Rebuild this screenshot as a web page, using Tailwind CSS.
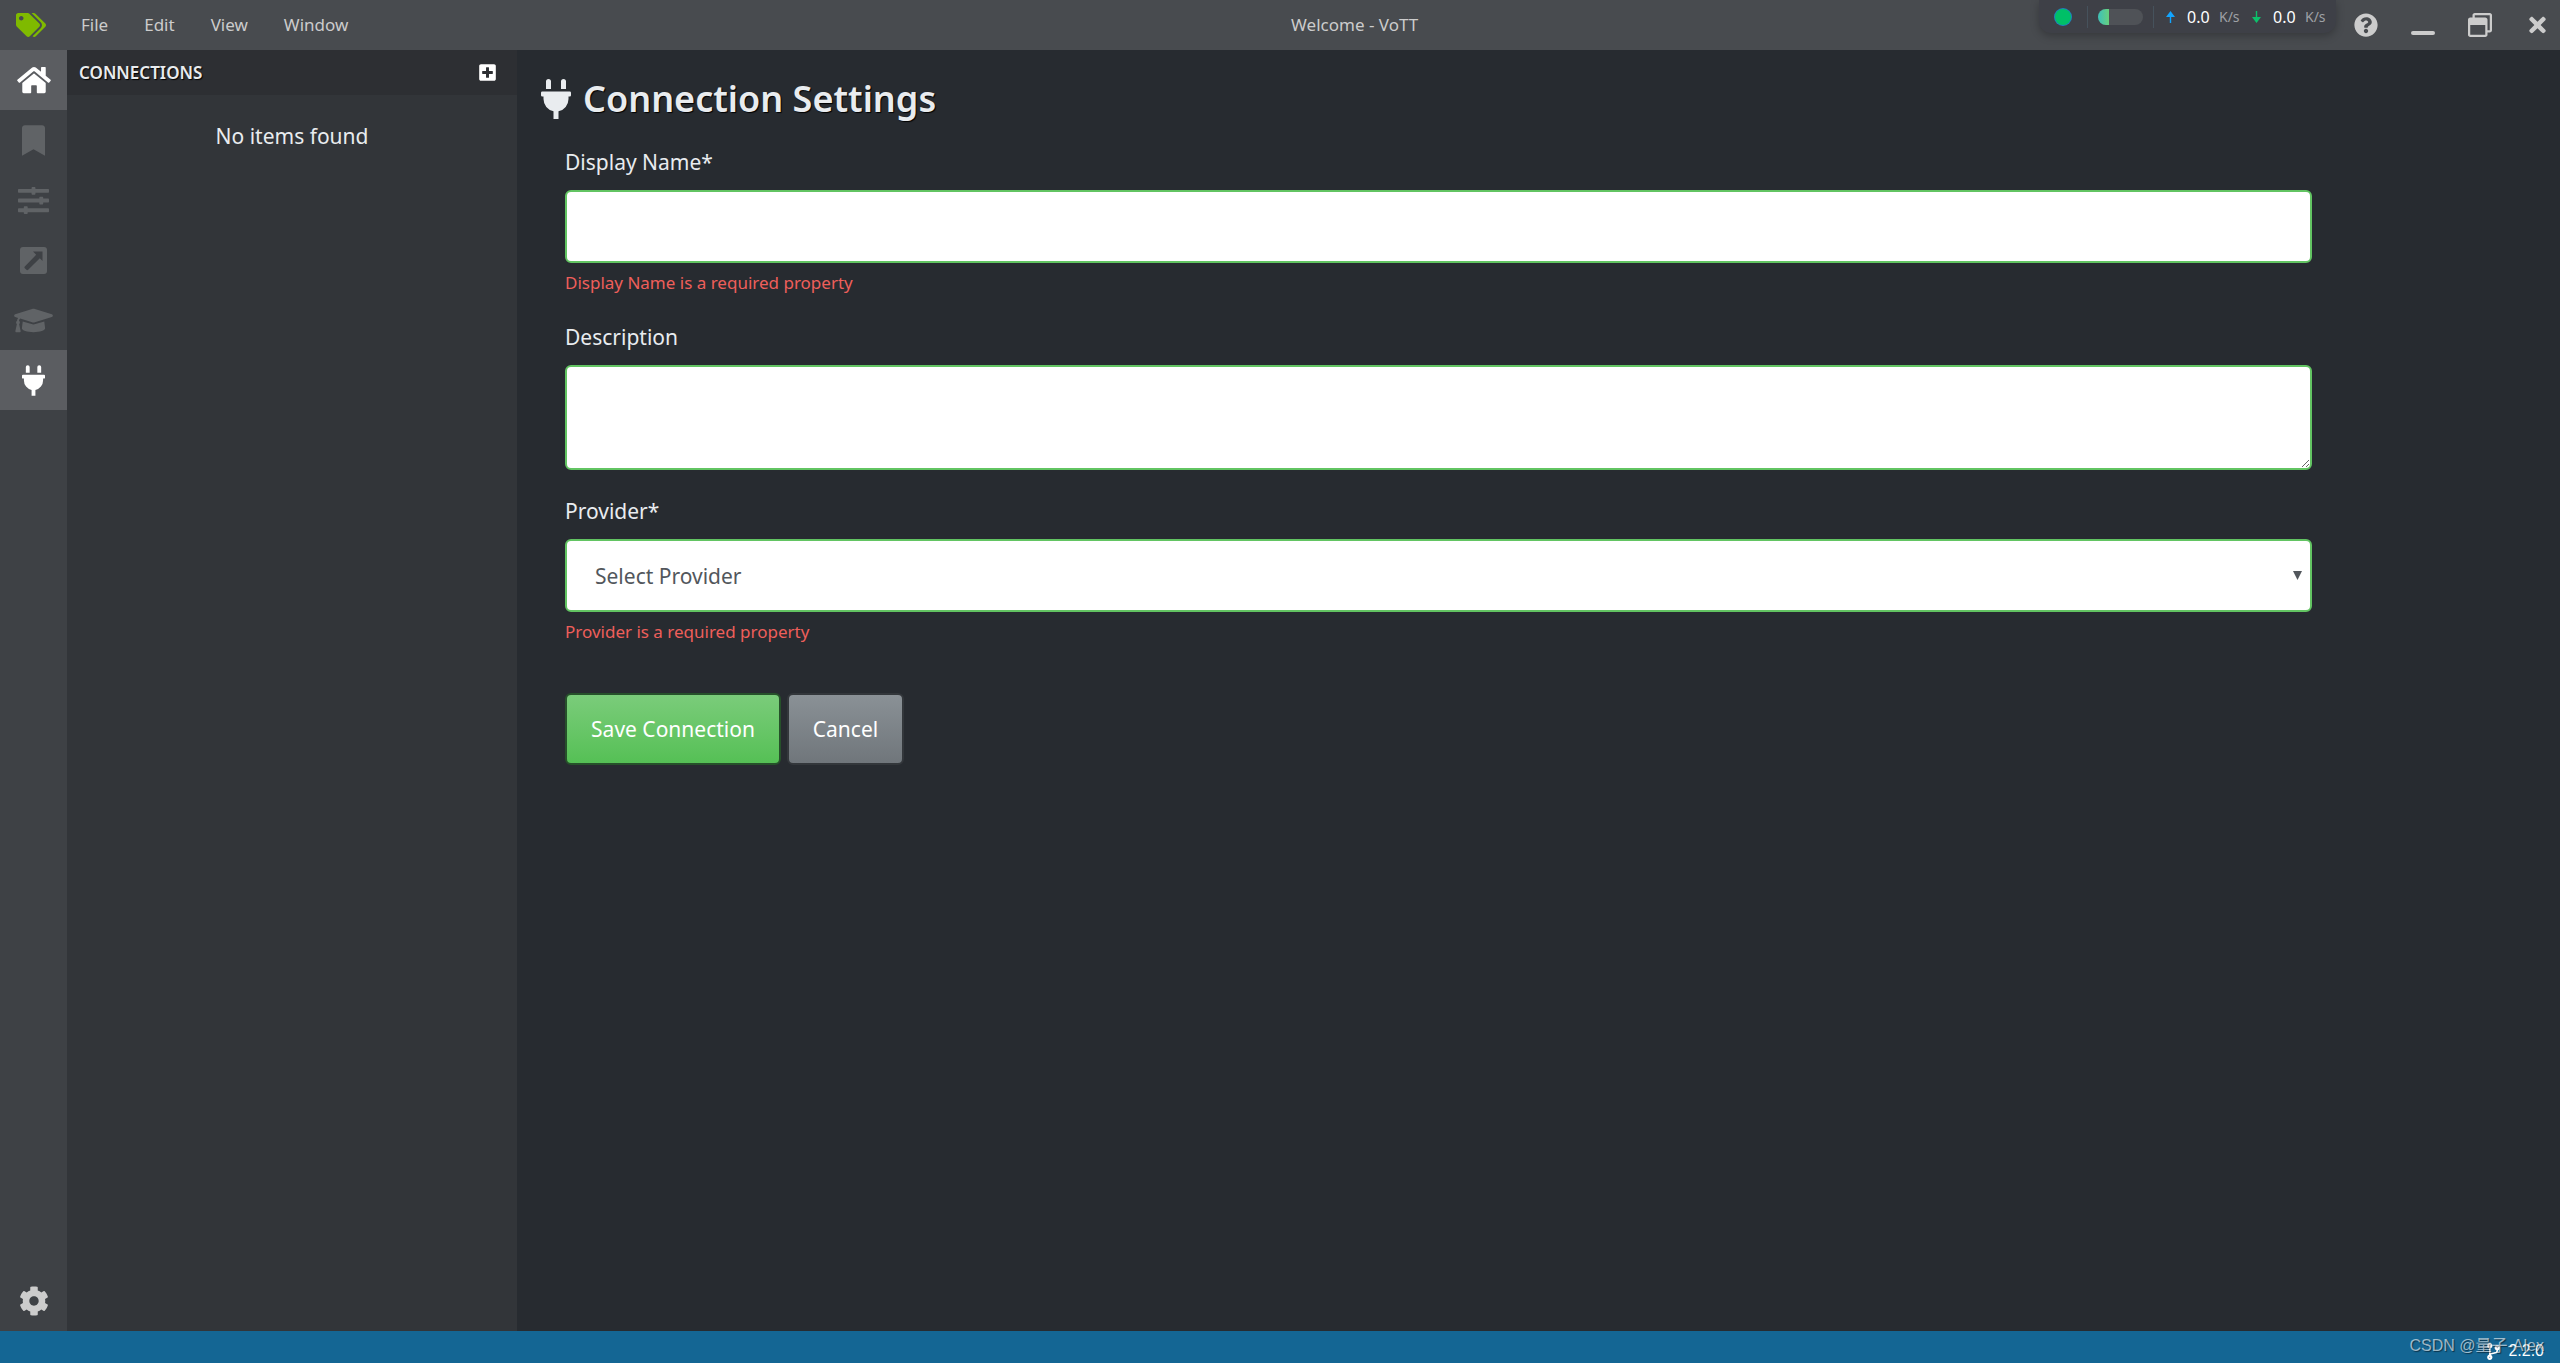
<!DOCTYPE html>
<html lang="en">
<head>
<meta charset="utf-8">
<meta name="viewport" content="width=device-width, initial-scale=1">
<title>Welcome - VoTT</title>
<script src="https://cdn.jsdelivr.net/npm/@tailwindcss/browser@4"></script>
</head>
<body class="flex flex-col min-h-screen bg-[#272b30] text-[#e9ecef] font-['Noto_Sans','Noto_Sans_CJK_SC',sans-serif] text-[21px] leading-[34px]">

<header class="relative flex h-[50px] shrink-0 items-center bg-[#484b4f] text-[17px] text-[#cccccc]">
  <svg class="ml-4 h-6 w-[30px] shrink-0 fill-[#7fba00]" viewBox="0 0 640 512" aria-hidden="true"><path d="M497.941 225.941L286.059 14.059A48 48 0 0 0 252.118 0H48C21.49 0 0 21.49 0 48v204.118a48 48 0 0 0 14.059 33.941l211.882 211.882c18.744 18.745 49.136 18.746 67.882 0l204.118-204.118c18.745-18.745 18.745-49.137 0-67.882zM112 160c-26.51 0-48-21.49-48-48s21.49-48 48-48 48 21.49 48 48-21.49 48-48 48zm513.941 133.823L421.823 497.941c-18.745 18.745-49.137 18.745-67.882 0l-.36-.36L527.64 323.522c16.999-16.999 26.362-39.6 26.362-63.64s-9.362-46.641-26.362-63.64L331.397 0h48.721a48 48 0 0 1 33.941 14.059l211.882 211.882c18.745 18.745 18.745 49.137 0 67.882z"/></svg>
  <nav class="ml-[17px] flex" aria-label="Application menu">
    <button class="px-[18px]">File</button>
    <button class="px-[18px]">Edit</button>
    <button class="px-[18px]">View</button>
    <button class="px-[18px]">Window</button>
  </nav>
  <div class="flex-1 text-center">Welcome - VoTT</div>
  <div class="flex gap-[11px]">
    <button class="grid h-[50px] w-[46px] place-items-center" aria-label="Help"><svg class="size-6 fill-current" viewBox="0 0 512 512"><path d="M504 256c0 136.997-111.043 248-248 248S8 392.997 8 256C8 119.083 119.043 8 256 8s248 111.083 248 248zM262.655 90c-54.497 0-89.255 22.957-116.549 63.758-3.536 5.286-2.353 12.415 2.715 16.258l34.699 26.31c5.205 3.947 12.621 3.008 16.665-2.122 17.864-22.658 30.113-35.797 57.303-35.797 20.429 0 45.698 13.148 45.698 32.958 0 14.976-12.363 22.667-32.534 33.976C247.128 238.528 216 254.941 216 296v4c0 6.627 5.373 12 12 12h56c6.627 0 12-5.373 12-12v-1.333c0-28.462 83.186-29.647 83.186-106.667 0-58.002-60.165-102-116.531-102zM256 338c-25.365 0-46 20.635-46 46 0 25.364 20.635 46 46 46s46-20.636 46-46c0-25.365-20.635-46-46-46z"/></svg></button>
    <button class="grid h-[50px] w-[46px] place-items-center" aria-label="Minimize"><svg class="size-6 fill-current" viewBox="0 0 24 24"><rect y="18" width="24" height="4" rx="2"/></svg></button>
    <button class="grid h-[50px] w-[46px] place-items-center" aria-label="Restore"><svg class="size-6 fill-current" viewBox="0 0 512 512"><path d="M464 0H144c-26.5 0-48 21.5-48 48v48H48c-26.5 0-48 21.5-48 48v320c0 26.5 21.5 48 48 48h320c26.5 0 48-21.5 48-48v-48h48c26.5 0 48-21.5 48-48V48c0-26.5-21.5-48-48-48zM368 464H48V256h320v208zm96-96h-48V144c0-26.5-21.5-48-48-48H144V48h320v320z"/></svg></button>
    <button class="grid h-[50px] w-[46px] place-items-center" aria-label="Close"><svg class="h-6 w-[17px] fill-current" viewBox="0 0 352 512"><path d="M242.72 256l100.07-100.07c12.28-12.28 12.28-32.19 0-44.48l-22.24-22.24c-12.28-12.28-32.19-12.28-44.48 0L176 189.28 75.93 89.21c-12.28-12.28-32.19-12.28-44.48 0L9.21 111.45c-12.28 12.28-12.28 32.19 0 44.48L109.28 256 9.21 356.07c-12.28 12.28-12.28 32.19 0 44.48l22.24 22.24c12.28 12.28 32.2 12.28 44.48 0L176 322.72l100.07 100.07c12.28 12.28 32.2 12.28 44.48 0l22.24-22.24c12.28-12.28 12.28-32.19 0-44.48L242.72 256z"/></svg></button>
  </div>

  <!-- Floating network monitor -->
  <div class="absolute top-0 right-[224px] flex h-[33px] w-[297px] items-center rounded-b-xl bg-[#3e4047] pl-4 text-base shadow-[0_3px_8px_rgba(0,0,0,0.25)]">
    <span class="size-4 rounded-full bg-[#00c067] ring-1 ring-[#2080c0]"></span>
    <span class="ml-4 h-[22px] w-px bg-[#46525c]"></span>
    <span class="ml-[10px] h-4 w-[45px] overflow-hidden rounded-full bg-[#4f5257]"><span class="block h-4 w-[11px] bg-linear-to-r from-[#3cc0b8] to-[#66d07c]"></span></span>
    <span class="ml-[10px] h-[22px] w-px bg-[#46525c]"></span>
    <svg class="ml-3 h-3 w-[9px] fill-[#12a5ff]" viewBox="0 0 9 12" aria-hidden="true"><path d="M4.500 0L9 6H5.200V12H3.800V6H0z"/></svg>
    <span class="ml-3 w-8 text-white">0.0</span>
    <span class="w-[33px] text-sm text-[#9fa1a5]">K/s</span>
    <svg class="h-3 w-[9px] fill-[#0cc06a]" viewBox="0 0 9 12" aria-hidden="true"><path d="M4.500 12L0 6H3.800V0H5.200V6H9z"/></svg>
    <span class="ml-3 w-8 text-white">0.0</span>
    <span class="text-sm text-[#9fa1a5]">K/s</span>
  </div>
</header>

<div class="flex flex-1">
  <nav class="flex w-[67px] shrink-0 flex-col bg-[#3e4145] text-[#606366]" aria-label="Sections">
    <a href="#home" aria-label="Home" class="grid h-[60px] place-items-center bg-[#5b5d61] text-white"><svg class="h-[30px] w-[34px] fill-current" viewBox="0 0 576 512"><path d="M488 312.700V456c0 13.300-10.700 24-24 24H348c-6.600 0-12-5.400-12-12V356c0-6.600-5.400-12-12-12h-72c-6.600 0-12 5.400-12 12v112c0 6.600-5.400 12-12 12H112c-13.300 0-24-10.700-24-24V312.700c0-3.600 1.600-7 4.400-9.300l188-154.800c4.400-3.600 10.800-3.600 15.300 0l188 154.800c2.700 2.300 4.300 5.700 4.300 9.300zm83.600-60.900L488 182.900V44.400c0-6.600-5.400-12-12-12h-56c-6.600 0-12 5.400-12 12V117l-89.500-73.700c-17.700-14.600-43.300-14.600-61 0L4.400 251.800c-5.100 4.200-5.800 11.800-1.600 16.900l25.500 31c4.200 5.100 11.800 5.800 16.900 1.600l235.200-193.700c4.400-3.600 10.800-3.600 15.300 0l235.200 193.700c5.100 4.200 12.700 3.500 16.900-1.600l25.500-31c4.200-5.200 3.400-12.700-1.700-16.900z"/></svg></a>
    <a href="#tags" aria-label="Tags" class="grid h-[60px] place-items-center"><svg class="h-[31px] w-[23px] fill-current" viewBox="0 0 384 512"><path d="M0 512V48C0 21.490 21.490 0 48 0h288c26.510 0 48 21.490 48 48v464L192 400 0 512z"/></svg></a>
    <a href="#settings" aria-label="Project settings" class="grid h-[60px] place-items-center"><svg class="size-[31px] fill-current" viewBox="0 0 512 512"><path d="M496 384H160v-16c0-8.800-7.200-16-16-16h-32c-8.800 0-16 7.200-16 16v16H16c-8.800 0-16 7.200-16 16v32c0 8.800 7.200 16 16 16h80v16c0 8.800 7.200 16 16 16h32c8.800 0 16-7.200 16-16v-16h336c8.800 0 16-7.200 16-16v-32c0-8.800-7.200-16-16-16zm0-160h-80v-16c0-8.800-7.200-16-16-16h-32c-8.800 0-16 7.200-16 16v16H16c-8.800 0-16 7.200-16 16v32c0 8.800 7.200 16 16 16h336v16c0 8.800 7.200 16 16 16h32c8.800 0 16-7.200 16-16v-16h80c8.800 0 16-7.200 16-16v-32c0-8.800-7.200-16-16-16zm0-160H288V48c0-8.800-7.200-16-16-16h-32c-8.800 0-16 7.200-16 16v16H16C7.200 64 0 71.200 0 80v32c0 8.800 7.200 16 16 16h208v16c0 8.800 7.200 16 16 16h32c8.800 0 16-7.200 16-16v-16h208c8.800 0 16-7.200 16-16V80c0-8.800-7.200-16-16-16z"/></svg></a>
    <a href="#export" aria-label="Export" class="grid h-[60px] place-items-center"><svg class="size-[27px]" viewBox="0 0 27 27"><rect width="27" height="27" rx="3" class="fill-current"/><path d="M13 4.500H22.500V14L19.800 11.300L8.200 22.800Q7.300 23.600 6.400 22.800L4.800 21.200Q4 20.300 4.800 19.400L16.200 7.800Z" fill="#3e4145"/></svg></a>
    <a href="#learning" aria-label="Active learning" class="grid h-[60px] place-items-center"><svg class="h-[31px] w-[39px] fill-current" viewBox="0 0 640 512"><path d="M622.340 153.200L343.400 67.500c-15.200-4.670-31.600-4.670-46.790 0L17.660 153.200c-23.540 7.230-23.540 38.360 0 45.590l48.630 14.940c-10.670 13.190-17.230 29.280-17.880 46.900C38.780 266.150 32 276.110 32 288c0 10.780 5.680 19.850 13.860 25.650L20.330 428.530C18.110 438.520 25.710 448 35.940 448h56.110c10.240 0 17.840-9.480 15.620-19.470L82.140 313.650C90.320 307.850 96 298.780 96 288c0-11.570-6.470-21.250-15.660-26.870.76-15.020 8.440-28.300 20.690-36.720L296.600 284.500c9.060 2.780 26.440 6.250 46.790 0l278.950-85.700c23.550-7.240 23.550-38.360 0-45.600zM352.790 315.090c-28.530 8.760-52.840 3.920-65.590 0l-145.020-44.550L128 384c0 35.350 85.960 64 192 64s192-28.650 192-64l-14.180-113.470-145.030 44.560z"/></svg></a>
    <a href="#connections" aria-label="Connections" class="grid h-[60px] place-items-center bg-[#5b5d61] text-white"><svg class="h-[31px] w-[23px] fill-current" viewBox="0 0 384 512"><path d="M320,32a32,32,0,0,0-64,0v96h64Zm48,128H16A16,16,0,0,0,0,176v32a16,16,0,0,0,16,16H32v32A160.070,160.070,0,0,0,160,412.800V512h64V412.800A160.070,160.070,0,0,0,352,256V224h16a16,16,0,0,0,16-16V176A16,16,0,0,0,368,160ZM128,32a32,32,0,0,0-64,0v96h64Z"/></svg></a>
    <a href="#app-settings" aria-label="Application settings" class="mt-auto grid h-[60px] place-items-center text-[#cccccc]"><svg class="size-[30px] fill-current" viewBox="0 0 512 512"><path d="M487.400 315.700l-42.600-24.600c4.300-23.200 4.300-47 0-70.200l42.600-24.600c4.900-2.800 7.100-8.600 5.500-14-11.100-35.600-30-67.800-54.700-94.600-3.800-4.100-10-5.100-14.800-2.300L380.800 110c-17.900-15.400-38.500-27.300-60.800-35.100V25.800c0-5.600-3.900-10.500-9.400-11.700-36.700-8.200-74.300-7.800-109.200 0-5.500 1.200-9.400 6.100-9.400 11.700V75c-22.200 7.900-42.800 19.800-60.800 35.100L88.700 85.500c-4.900-2.800-11-1.900-14.800 2.300-24.700 26.700-43.600 58.900-54.700 94.600-1.700 5.400.6 11.200 5.500 14L67.300 221c-4.300 23.200-4.300 47 0 70.200l-42.600 24.600c-4.900 2.800-7.100 8.600-5.500 14 11.100 35.600 30 67.800 54.700 94.600 3.800 4.100 10 5.100 14.800 2.300l42.600-24.600c17.900 15.400 38.500 27.300 60.800 35.100v49.200c0 5.600 3.900 10.500 9.400 11.700 36.700 8.200 74.300 7.800 109.200 0 5.500-1.200 9.400-6.100 9.400-11.700v-49.200c22.200-7.900 42.800-19.800 60.800-35.100l42.600 24.600c4.900 2.800 11 1.900 14.800-2.300 24.700-26.700 43.600-58.900 54.700-94.600 1.500-5.500-.7-11.300-5.600-14.100zM256 336c-44.100 0-80-35.900-80-80s35.900-80 80-80 80 35.900 80 80-35.900 80-80 80z"/></svg></a>
  </nav>

  <aside class="w-[450px] shrink-0 bg-[#323539]">
    <div class="flex h-[45px] items-center justify-between bg-[#2d2f33] pr-[21px] pl-3">
      <h2 class="text-[17px] font-semibold [text-shadow:1px_1px_1px_black]">CONNECTIONS</h2>
      <button aria-label="New connection"><svg class="h-[19px] w-[17px] fill-white" viewBox="0 0 448 512"><path d="M400 32H48C21.500 32 0 53.500 0 80v352c0 26.500 21.500 48 48 48h352c26.500 0 48-21.500 48-48V80c0-26.500-21.500-48-48-48zm-32 252c0 6.600-5.400 12-12 12h-92v92c0 6.600-5.400 12-12 12h-56c-6.600 0-12-5.400-12-12v-92H92c-6.600 0-12-5.400-12-12v-56c0-6.600 5.400-12 12-12h92v-92c0-6.600 5.400-12 12-12h56c6.600 0 12 5.400 12 12v92h92c6.600 0 12 5.400 12 12v56z"/></svg></button>
    </div>
    <p class="pt-6 text-center">No items found</p>
  </aside>

  <main class="min-w-0 flex-1 pt-6 pr-[248px] pl-6">
    <h1 class="flex h-[50px] items-center gap-3 text-[36px] font-semibold [text-shadow:1px_1px_1px_black]">
      <svg class="h-10 w-[30px] fill-current" viewBox="0 0 384 512" aria-hidden="true"><path d="M320,32a32,32,0,0,0-64,0v96h64Zm48,128H16A16,16,0,0,0,0,176v32a16,16,0,0,0,16,16H32v32A160.070,160.070,0,0,0,160,412.800V512h64V412.800A160.070,160.070,0,0,0,352,256V224h16a16,16,0,0,0,16-16V176A16,16,0,0,0,368,160ZM128,32a32,32,0,0,0-64,0v96h64Z"/></svg>
      Connection Settings
    </h1>
    <form class="mt-[21px] flex flex-col gap-6 pl-6">
      <div>
        <label for="name" class="mb-[11px] block">Display Name*</label>
        <input id="name" type="text" class="block h-[73px] w-full rounded-md border-2 border-[#62c462] bg-white px-7 text-[#52575c] outline-none">
        <p class="mt-[7px] text-[17px] leading-[26px] text-[#ee5f5b]">Display Name is a required property</p>
      </div>
      <div>
        <label for="description" class="mb-[11px] block">Description</label>
        <textarea id="description" class="block h-[105px] w-full rounded-md border-2 border-[#62c462] bg-white px-7 py-4 text-[#52575c] outline-none"></textarea>
      </div>
      <div>
        <label for="provider" class="mb-[11px] block">Provider*</label>
        <div class="relative">
          <select id="provider" class="block h-[73px] w-full appearance-none rounded-md border-2 border-[#62c462] bg-white px-7 text-[#52575c] outline-none"><option>Select Provider</option></select>
          <svg class="pointer-events-none absolute top-8 right-[10px] h-[9px] w-[9px] fill-[#52575c]" viewBox="0 0 9 9" aria-hidden="true"><path d="M0 0H9L4.500 9z"/></svg>
        </div>
        <p class="mt-[7px] text-[17px] leading-[26px] text-[#ee5f5b]">Provider is a required property</p>
      </div>
      <div class="mt-6 flex gap-[6px] text-white [text-shadow:2px_2px_2px_rgba(0,0,0,0.3)]">
        <button type="submit" class="h-[72px] w-[216px] rounded-md border-2 border-[#26512a] bg-linear-to-b from-[#7acc7a] to-[#55c055]">Save Connection</button>
        <button type="button" class="h-[72px] w-[117px] rounded-md border-2 border-[#33373b] bg-linear-to-b from-[#8a9196] to-[#70767b]">Cancel</button>
      </div>
    </form>
  </main>
</div>

<footer class="relative flex h-8 shrink-0 items-center justify-end gap-2 bg-[#146694] pt-2 pr-4 font-['Liberation_Sans',sans-serif] text-base text-white">
  <svg class="h-[17px] w-[13px] fill-current" viewBox="0 0 384 512" aria-hidden="true"><path d="M384 144c0-44.200-35.800-80-80-80s-80 35.800-80 80c0 36.400 24.300 67.100 57.500 76.800-.6 16.100-4.200 28.500-11 36.900-15.400 19.200-49.300 22.400-85.200 25.700-28.200 2.600-57.400 5.400-81.300 16.900v-144c32.500-10.200 56-40.500 56-76.300 0-44.200-35.800-80-80-80S0 35.800 0 80c0 35.800 23.500 66.100 56 76.300v199.300C23.500 365.900 0 396.200 0 432c0 44.200 35.800 80 80 80s80-35.800 80-80c0-34-21.200-63.100-51.200-74.600 3.100-5.200 7.800-9.800 14.900-13.400 16.200-8.200 40.400-10.400 66.100-12.800 42.200-3.900 90-8.400 118.200-43.400 14-17.400 21.100-39.800 21.600-67.900 31.600-10.800 54.400-40.700 54.400-75.900zM80 64c8.800 0 16 7.200 16 16s-7.200 16-16 16-16-7.200-16-16 7.200-16 16-16zm0 384c-8.800 0-16-7.200-16-16s7.200-16 16-16 16 7.200 16 16-7.200 16-16 16zm224-320c8.800 0 16 7.200 16 16s-7.200 16-16 16-16-7.200-16-16 7.200-16 16-16z"/></svg>
  <span>2.2.0</span>
  <span class="absolute top-[3px] right-4 font-['Liberation_Sans','Noto_Sans_CJK_SC',sans-serif] leading-6 whitespace-nowrap text-white/60 [text-shadow:1px_1px_1px_rgba(0,0,0,0.5)]">CSDN @量子-Alex</span>
</footer>
</body>
</html>
